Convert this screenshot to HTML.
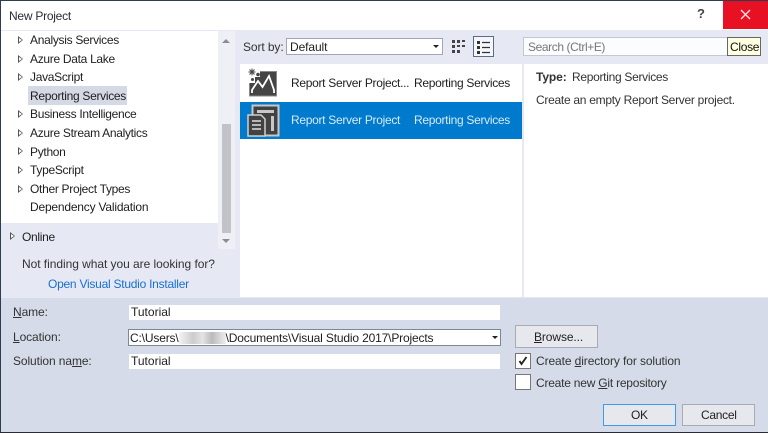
<!DOCTYPE html>
<html><head><meta charset="utf-8"><style>
html,body{margin:0;padding:0}
body{width:768px;height:433px;overflow:hidden;position:relative;background:#d5dbe8;font-family:"Liberation Sans",sans-serif;font-size:12px;color:#1e1e1e}
.a{position:absolute}
.t{position:absolute;white-space:nowrap;line-height:16px;letter-spacing:-.3px}
.tri{position:absolute;width:0;height:0;border-left:5px solid #555;border-top:4px solid transparent;border-bottom:4px solid transparent}
.tri:after{content:"";position:absolute;left:-4px;top:-2px;width:0;height:0;border-left:3px solid #fff;border-top:2px solid transparent;border-bottom:2px solid transparent}
.inp{position:absolute;background:#fff;box-sizing:border-box}
u{text-decoration:underline}
</style></head><body>
<div class="a" style="left:0;top:30px;width:768px;height:268px;background:#e6e9f4"></div>
<div class="a" style="left:0;top:0;width:768px;height:30px;background:#fff"></div>
<div class="t" style="left:9px;top:8px;color:#2a2a3a;letter-spacing:-.25px">New Project</div>
<div class="t" style="left:697px;top:6px;font-weight:bold;font-size:13px;color:#444">?</div>
<div class="a" style="left:723px;top:1px;width:45px;height:28px;background:#e81123"></div>
<svg class="a" style="left:740px;top:9px" width="11" height="11"><path d="M1 1L10 10M10 1L1 10" stroke="#fff" stroke-width="1.3" opacity=".9"/></svg>

<!-- tree -->
<div class="a" style="left:1px;top:31px;width:217px;height:192px;background:#fff"></div>
<div class="a" style="left:28px;top:86px;width:99px;height:19px;background:#d5d8e5"></div>
<div class="tri" style="left:18px;top:36px"></div><div class="t" style="left:30px;top:32px">Analysis Services</div>
<div class="tri" style="left:18px;top:55px"></div><div class="t" style="left:30px;top:51px">Azure Data Lake</div>
<div class="tri" style="left:18px;top:73px"></div><div class="t" style="left:30px;top:69px">JavaScript</div>
<div class="t" style="left:30px;top:88px">Reporting Services</div>
<div class="tri" style="left:18px;top:110px"></div><div class="t" style="left:30px;top:106px">Business Intelligence</div>
<div class="tri" style="left:18px;top:129px"></div><div class="t" style="left:30px;top:125px">Azure Stream Analytics</div>
<div class="tri" style="left:18px;top:147px"></div><div class="t" style="left:30px;top:144px">Python</div>
<div class="tri" style="left:18px;top:166px"></div><div class="t" style="left:30px;top:162px">TypeScript</div>
<div class="tri" style="left:18px;top:185px"></div><div class="t" style="left:30px;top:181px">Other Project Types</div>
<div class="t" style="left:30px;top:199px;letter-spacing:-.2px">Dependency Validation</div>
<!-- scrollbar -->
<div class="a" style="left:218px;top:31px;width:17px;height:218px;background:#eef0f6"></div>
<div class="a" style="left:222px;top:124px;width:9px;height:109px;background:#c2c3c9"></div>
<div class="a" style="left:222px;top:39px;width:0;height:0;border-left:4.5px solid transparent;border-right:4.5px solid transparent;border-bottom:4px solid #8a8c9c"></div>
<div class="a" style="left:222px;top:239px;width:0;height:0;border-left:4.5px solid transparent;border-right:4.5px solid transparent;border-top:4px solid #8a8c9c"></div>

<div class="tri" style="left:10px;top:232px"></div><div class="t" style="left:22px;top:229px">Online</div>
<div class="t" style="left:22px;top:256px;color:#333;letter-spacing:-.05px">Not finding what you are looking for?</div>
<div class="t" style="left:48px;top:276px;color:#1a6fd0;letter-spacing:-.25px">Open Visual Studio Installer</div>

<!-- sort bar -->
<div class="t" style="left:243px;top:39px;color:#333;letter-spacing:-.1px">Sort by:</div>
<div class="inp" style="left:286px;top:38px;width:157px;height:17px;border:1px solid #9ea6b8"></div>
<div class="t" style="left:290px;top:39px;letter-spacing:-.1px">Default</div>
<div class="a" style="left:433px;top:45px;width:0;height:0;border-left:3.5px solid transparent;border-right:3.5px solid transparent;border-top:3.5px solid #222"></div>
<svg class="a" style="left:451px;top:38px" width="16" height="16" fill="#444"><path d="M1 2h3v3H1zM6 2h3v3H6zM11 2h3v2h-3zM1 7h3v3H1zM6 7h3v2H6zM11 7h3v2h-3zM1 12h3v3H1zM6 12h3v3H6z"/></svg>
<div class="a" style="left:473px;top:36px;width:21px;height:21px;box-sizing:border-box;background:#f4f6fb;border:1px solid #5d6b8a"></div>
<svg class="a" style="left:477px;top:40px" width="14" height="14"><path d="M0 1h3v3H0zM0 6h3v3H0zM0 11h3v3H0z" fill="#333"/><path d="M5 2.5h8M5 7.5h8M5 12.5h8" stroke="#333" stroke-width="1.2"/></svg>
<div class="inp" style="left:523px;top:37px;width:228px;height:19px;border:1px solid #c3c8d6;background:#fbfcfe"></div>
<div class="t" style="left:528px;top:39px;color:#777;letter-spacing:-.4px">Search (Ctrl+E)</div>
<div class="a" style="left:727px;top:37px;width:34px;height:19px;box-sizing:border-box;background:#ffffe1;border:1px solid #666"></div>
<div class="t" style="left:730px;top:39px;color:#111">Close</div>

<!-- list -->
<div class="a" style="left:240px;top:64px;width:282px;height:233px;background:#fff"></div>
<div class="a" style="left:240px;top:102px;width:282px;height:37px;background:#007acc"></div>
<svg class="a" style="left:248px;top:68px" width="30" height="29"><rect x="1.5" y="3.5" width="27" height="24.5" fill="#444" stroke="#888"/><path d="M0 0h12v9H7v6H0z" fill="#fff"/><path d="M4 25V22L10 13L14.500 19L21 8L26 22V25" fill="none" stroke="#fff" stroke-width="1.8"/><path d="M4 0.500V7.500M0.500 4H7.500M1.500 1.500L6.500 6.500M6.500 1.500L1.500 6.500" stroke="#444" stroke-width="1"/><circle cx="10" cy="6.500" r="1.800" fill="#444"/><circle cx="4.500" cy="11.500" r="1.500" fill="#444"/></svg>
<svg class="a" style="left:246px;top:104px" width="34" height="33"><rect x="6.500" y="1.500" width="26" height="30" fill="#424242" stroke="#c8c8c8" stroke-width="2"/><path d="M11 6h17v3H11z" fill="#c8c8c8"/><path d="M25 12h3v15h-3z" fill="#c8c8c8"/><path d="M2 11h13l4 4v17H2z" fill="#424242" stroke="#d0d0d0" stroke-width="1.500"/><path d="M6 17h9M6 21h9M6 25h9" stroke="#e0e0e0" stroke-width="1.500"/></svg>
<div class="t" style="left:291px;top:75px">Report Server Project...</div>
<div class="t" style="left:414px;top:75px">Reporting Services</div>
<div class="t" style="left:291px;top:112px;color:#d6eaf8">Report Server Project</div>
<div class="t" style="left:414px;top:112px;color:#d6eaf8">Reporting Services</div>

<!-- detail -->
<div class="a" style="left:524px;top:64px;width:244px;height:233px;background:#fff"></div>
<div class="t" style="left:536px;top:69px;font-weight:bold;color:#333;letter-spacing:-.1px">Type:</div>
<div class="t" style="left:572px;top:69px;color:#333">Reporting Services</div>
<div class="t" style="left:536px;top:92px;color:#333;letter-spacing:-.28px">Create an empty Report Server project.</div>

<!-- bottom -->
<div class="t" style="left:13px;top:304px;color:#333;letter-spacing:-.1px"><u>N</u>ame:</div>
<div class="t" style="left:13px;top:329px;color:#333;letter-spacing:-.1px"><u>L</u>ocation:</div>
<div class="t" style="left:13px;top:353px;color:#333;letter-spacing:-.1px">Solution na<u>m</u>e:</div>
<div class="inp" style="left:129px;top:305px;width:371px;height:15px"></div>
<div class="t" style="left:131px;top:304px;letter-spacing:0">Tutorial</div>
<div class="inp" style="left:128px;top:329px;width:373px;height:17px;border:1px solid #7d8798"></div>
<div class="t" style="left:130px;top:330px;letter-spacing:-.16px">C:\Users\<span style="display:inline-block;width:47px;height:12px;vertical-align:-2px;background:linear-gradient(90deg,#f4f4f4,#ccc 30%,#e4e4e4 50%,#bbb 70%,#eee)"></span>\Documents\Visual Studio 2017\Projects</div>
<div class="a" style="left:492px;top:336px;width:0;height:0;border-left:3.5px solid transparent;border-right:3.5px solid transparent;border-top:3.5px solid #222"></div>
<div class="inp" style="left:129px;top:354px;width:371px;height:15px"></div>
<div class="t" style="left:131px;top:353px;letter-spacing:0">Tutorial</div>
<div class="a" style="left:515px;top:325px;width:83px;height:23px;box-sizing:border-box;background:#e7e8ee;border:1px solid #a9abb2"></div>
<div class="t" style="left:534px;top:329px;color:#222;letter-spacing:-.1px"><u>B</u>rowse...</div>
<div class="inp" style="left:515px;top:353px;width:16px;height:16px;border:1px solid #777"></div>
<svg class="a" style="left:518px;top:355px" width="11" height="11"><path d="M1.500 6L3.500 9L8.500 2" fill="none" stroke="#222" stroke-width="1.900"/></svg>
<div class="t" style="left:536px;top:353px;color:#333;letter-spacing:-.1px">Create <u>d</u>irectory for solution</div>
<div class="inp" style="left:515px;top:374px;width:16px;height:16px;border:1px solid #777"></div>
<div class="t" style="left:536px;top:375px;color:#333;letter-spacing:-.22px">Create new <u>G</u>it repository</div>
<div class="a" style="left:603px;top:404px;width:73px;height:22px;box-sizing:border-box;background:#e7e8ee;border:1px solid #3f9ae8"></div>
<div class="t" style="left:631px;top:407px;color:#222">OK</div>
<div class="a" style="left:682px;top:404px;width:73px;height:22px;box-sizing:border-box;background:#e7e8ee;border:1px solid #a9abb2"></div>
<div class="t" style="left:701px;top:407px;color:#222">Cancel</div>

<!-- window border -->
<div class="a" style="left:0;top:0;width:768px;height:1px;background:#2b3d4f"></div>
<div class="a" style="left:0;top:0;width:1px;height:433px;background:#2b3d4f"></div>
<div class="a" style="left:0;top:432px;width:768px;height:1px;background:#2b2b35"></div>
</body></html>
